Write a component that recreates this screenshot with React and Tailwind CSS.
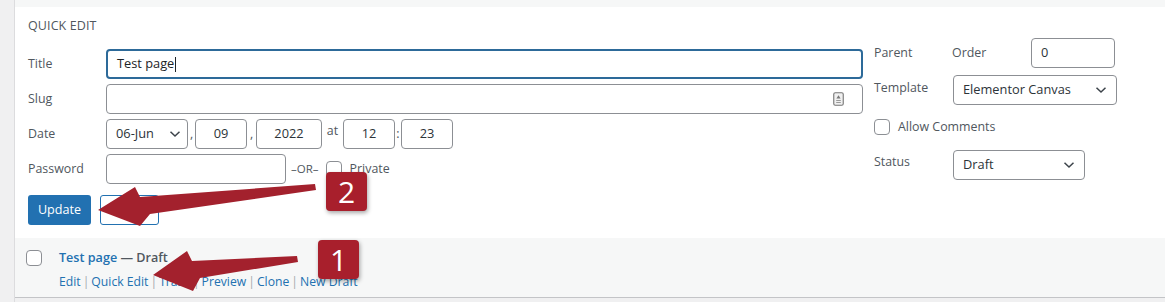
import React from "react";

const font = { fontFamily: '"Open Sans", "Noto Sans", Arial, sans-serif' };

function Chevron({ className = "" }) {
  return (
    <svg width="12" height="8" viewBox="0 0 12 8" className={className}>
      <path d="M1.5 1.8 L6 6 L10.5 1.8" fill="none" stroke="#3c434a" strokeWidth="1.5" />
    </svg>
  );
}

function Box({ className = "", children }) {
  return (
    <div className={`h-[30px] rounded-[4px] border border-[#8c8f94] bg-white flex items-center text-[12.8px] text-[#2c3338] ${className}`}>
      {children}
    </div>
  );
}

function Check({ className = "" }) {
  return <div className={`w-4 h-4 rounded-[4px] border border-[#8c8f94] bg-white ${className}`} />;
}

function Sep() {
  return <span className="text-[#a7aaad] mx-[2px]">|</span>;
}

export default function App() {
  return (
    <div className="relative w-[1165px] h-[302px] bg-[#f0f0f1] overflow-hidden" style={font}>
      <div className="ml-[14px] border-l border-[#dcdcde] h-full flex flex-col">
        <div className="h-[7px] bg-[#f6f7f7]" />
        <div className="bg-white h-[231px] pl-[13px] flex">
          {/* left column */}
          <div className="w-[835px]">
            <div className="h-[42px] pt-[10px] text-[12.5px] text-[#50575e] tracking-[0.1px]">QUICK EDIT</div>
            <div className="flex flex-col gap-[5px]">
              <div className="flex items-center">
                <span className="w-[78px] text-[12.4px] text-[#50575e]">Title</span>
                <div className="h-[30px] w-[757px] rounded-[4px] border-2 border-[#2d6a99] flex items-center pl-[9px] text-[12.8px] text-[#1d2327]">
                  Test page<span className="w-px h-[15px] bg-[#1d2327] ml-[1px]" />
                </div>
              </div>
              <div className="flex items-center">
                <span className="w-[78px] text-[12.4px] text-[#50575e]">Slug</span>
                <Box className="w-[757px] justify-end pr-[18px]">
                  <svg width="11" height="14" viewBox="0 0 11 14">
                    <rect x="0.75" y="0.75" width="9.5" height="12.5" rx="1.5" fill="#f0f0f0" stroke="#767676" strokeWidth="1.1" />
                    <path d="M5.5 3.2 L7.6 6.6 H3.4 Z" fill="#767676" />
                    <rect x="3.2" y="8" width="4.6" height="1" fill="#9a9a9a" />
                    <rect x="3.2" y="10" width="4.6" height="1" fill="#9a9a9a" />
                  </svg>
                </Box>
              </div>
              <div className="flex items-center text-[12.4px] text-[#50575e]">
                <span className="w-[78px]">Date</span>
                <Box className="w-[82px] justify-between pl-[9px] pr-[6px]">
                  06-Jun
                  <Chevron />
                </Box>
                <span className="w-[7px] text-center">,</span>
                <Box className="w-[52px] justify-center">09</Box>
                <span className="w-[9px] text-center">,</span>
                <Box className="w-[66px] justify-center">2022</Box>
                <span className="w-[21px] text-center -mt-[6px]">at</span>
                <Box className="w-[52px] justify-center">12</Box>
                <span className="w-[6px] text-center">:</span>
                <Box className="w-[52px] justify-center">23</Box>
              </div>
              <div className="flex items-center text-[12.4px] text-[#50575e]">
                <span className="w-[78px]">Password</span>
                <Box className="w-[180px]" />
                <span className="ml-[5px] text-[11.5px]">–OR–</span>
                <Check className="ml-[7px]" />
                <span className="ml-[8px]">Private</span>
              </div>
            </div>
            <div className="flex gap-[9px] mt-[11px]">
              <div className="h-[30px] w-[63px] rounded-[3px] bg-[#2271b1] text-white text-[12.6px] flex items-center justify-center">Update</div>
              <div className="h-[30px] w-[59px] rounded-[3px] border border-[#2271b1] bg-white text-[#2271b1] text-[12.6px] flex items-center justify-center">Cancel</div>
            </div>
          </div>
          {/* right column */}
          <div className="ml-[11px] pt-[31px] text-[12.4px] text-[#50575e]">
            <div className="flex items-center">
              <span className="w-[78px]">Parent</span>
              <span className="w-[79px]">Order</span>
              <Box className="w-[84px] pl-[9px]">0</Box>
            </div>
            <div className="flex items-center mt-[7px]">
              <span className="w-[79px] -mt-[4px]">Template</span>
              <Box className="w-[164px] justify-between pl-[9px] pr-[9px]">
                Elementor Canvas
                <Chevron />
              </Box>
            </div>
            <div className="flex items-center mt-[13px]">
              <Check />
              <span className="ml-[8px]">Allow Comments</span>
            </div>
            <div className="flex items-center mt-[13px]">
              <span className="w-[79px] -mt-[4px]">Status</span>
              <Box className="w-[132px] justify-between pl-[9px] pr-[9px]">
                Draft
                <Chevron />
              </Box>
            </div>
          </div>
        </div>
        <div className="h-[60px] bg-[#f6f7f7] border-b border-[#c3c4c7] flex pl-[11px] pt-[11px]">
          <Check className="mt-[1px]" />
          <div className="ml-[17px] text-[12.6px]">
            <div className="font-semibold leading-[18px]">
              <span className="text-[#2271b1]">Test page</span>
              <span className="text-[#50575e]"> — Draft</span>
            </div>
            <div className="mt-[6px] leading-[18px] text-[12.2px] text-[#2271b1] whitespace-nowrap">
              Edit<Sep />Quick Edit<Sep />Trash<Sep />Preview<Sep />Clone<Sep />New Draft
            </div>
          </div>
        </div>
      </div>

      {/* annotations */}
      <svg className="absolute left-0 top-0 pointer-events-none" width="1165" height="302">
        <polygon points="98,210 135,187 140,197 315,184 316,190 150,214 140,226" fill="#a3212d" />
        <polygon points="153,275 187,251 192,261 297,256 298,262 200,278 193,291" fill="#a3212d" />
      </svg>
      <div className="absolute left-[326px] top-[172px] w-[41px] h-[39px] rounded-[4px] bg-[#a81f2c] shadow-[1px_2px_4px_rgba(0,0,0,0.35)] flex items-center justify-center text-white text-[30px] font-medium leading-none">2</div>
      <div className="absolute left-[318px] top-[240px] w-[41px] h-[39px] rounded-[4px] bg-[#a81f2c] shadow-[1px_2px_4px_rgba(0,0,0,0.35)] flex items-center justify-center text-white text-[30px] font-medium leading-none">1</div>
    </div>
  );
}
